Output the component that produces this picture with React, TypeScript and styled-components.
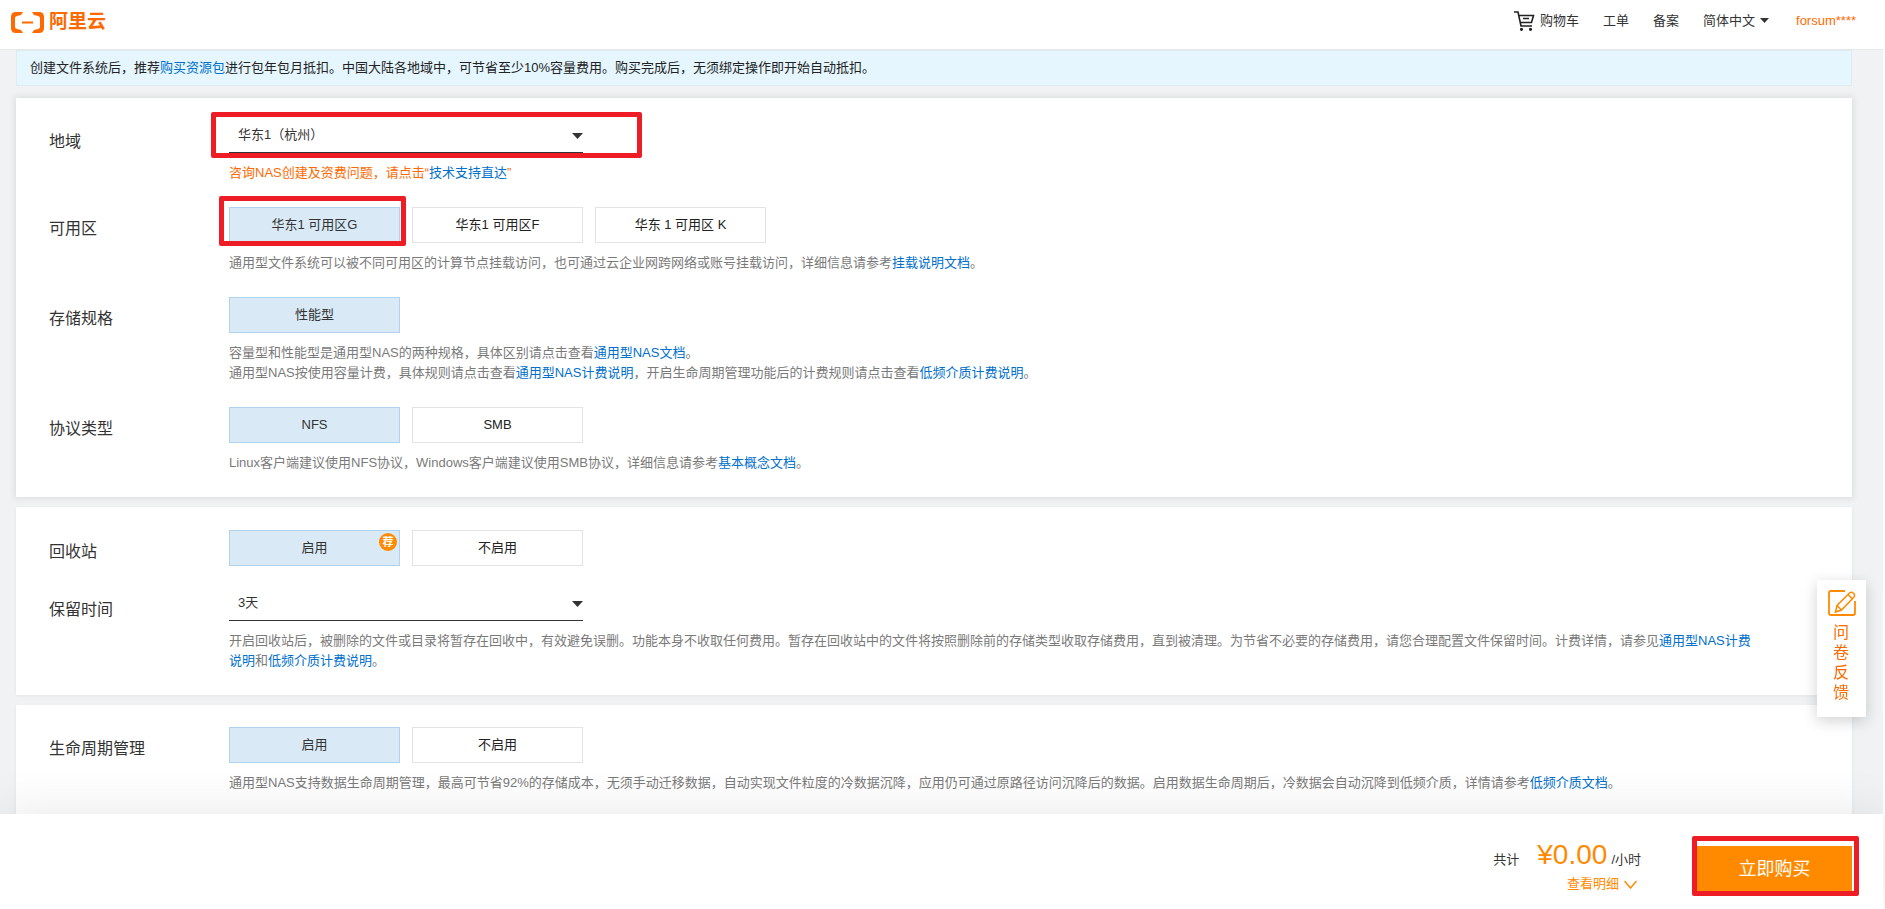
import React, { ReactNode } from 'react';
import styled, { createGlobalStyle } from 'styled-components';

const GlobalStyle = createGlobalStyle`
  * { box-sizing: border-box; }
  body {
    margin: 0;
    background: #f0f2f4;
    color: #333;
    font: 13px/20px "Liberation Sans", "Noto Sans CJK SC", sans-serif;
  }
  button, select { font: inherit; color: inherit; }
`;

const Shell = styled.div`
  display: flex;
  flex-direction: column;
  height: 100vh;
  border-right: 2px solid #fff;
`;

const Header = styled.header`
  display: flex;
  align-items: center;
  justify-content: space-between;
  flex: none;
  height: 50px;
  padding: 0 27px 8px 11px;
  background: #fff;
  border-bottom: 1px solid #e6e8e8;
`;

const LogoLink = styled.a`
  display: flex;
  align-items: center;
  gap: 5px;
  padding-top: 3px;
  color: #ff6a00;
  font-size: 19px;
  font-weight: 700;
  line-height: 24px;
  text-decoration: none;
`;

const Nav = styled.nav`
  display: flex;
  align-items: center;
  gap: 24px;
`;

const NavLink = styled.a<{ $accent?: boolean }>`
  display: flex;
  align-items: center;
  gap: 5px;
  color: ${p => (p.$accent ? '#ff6a00' : '#333')};
  text-decoration: none;
  margin-left: ${p => (p.$accent ? '3px' : '0')};
`;

const Main = styled.main`
  flex: 1;
  min-height: 0;
  overflow-y: auto;
  scrollbar-width: none;
  padding: 0 31px 24px 16px;
`;

const Notice = styled.p`
  margin: 0 0 12px;
  padding: 7px 13px;
  color: #222;
  background: #e5f6ff;
  border: 1px solid #e0ebf0;
`;

const Card = styled.section<{ $top: number; $raised?: boolean }>`
  display: flex;
  flex-direction: column;
  gap: 24px;
  margin-bottom: 10px;
  padding: ${p => p.$top}px 33px 24px;
  background: #fff;
  box-shadow: ${p => (p.$raised ? '0 0 6px 2px rgba(0,0,0,.08)' : '0 1px 4px rgba(0,0,0,.06)')};
`;

const Row = styled.div`
  display: grid;
  grid-template-columns: 180px minmax(0, 1fr);
`;

const Label = styled.label<{ $compact?: boolean }>`
  padding-top: ${p => (p.$compact ? 8 : 10)}px;
  font-size: 16px;
  line-height: 24px;
`;

const Options = styled.div`
  display: flex;
  gap: 12px;
`;

const OptionBox = styled.div`
  position: relative;
  width: 171px;
`;

const Option = styled.button<{ $on?: boolean }>`
  display: block;
  width: 100%;
  height: 36px;
  padding: 0;
  cursor: pointer;
  color: ${p => (p.$on ? '#333' : '#222')};
  background: ${p => (p.$on ? '#d9eaf6' : '#fff')};
  border: 1px solid ${p => (p.$on ? '#b0d3ef' : '#e3e3e3')};
`;

const Badge = styled.span`
  position: absolute;
  top: 3px;
  right: 3px;
  width: 18px;
  height: 18px;
  border-radius: 50%;
  background: #ff8a00;
  color: #fff;
  font-size: 11px;
  font-weight: 700;
  line-height: 18px;
  text-align: center;
`;

const SelectBox = styled.div`
  position: relative;
  width: 354px;
  height: 31px;
`;

const Select = styled.select`
  appearance: none;
  width: 100%;
  height: 100%;
  padding: 0 20px 5px 9px;
  background: none;
  border: 0;
  border-bottom: 1px solid #333;
  border-radius: 0;
`;

const SelectCaret = styled.svg`
  position: absolute;
  top: 11px;
  right: 0;
  pointer-events: none;
`;

const Help = styled.p<{ $accent?: boolean }>`
  margin: 10px 0 0;
  color: ${p => (p.$accent ? '#ff6a00' : '#7a7a7a')};
`;

const Link = styled.a`
  color: #0070cc;
  text-decoration: none;
`;

const Highlight = styled.span<{ $inset: string }>`
  position: absolute;
  inset: ${p => p.$inset};
  border: 5px solid #ee1c25;
  border-radius: 2px;
  pointer-events: none;
`;

const Footer = styled.footer`
  position: relative;
  display: flex;
  align-items: flex-start;
  justify-content: flex-end;
  flex: none;
  gap: 56px;
  height: 95px;
  padding: 27px 31px 0 16px;
  background: #fff;
  box-shadow: 0 0 50px rgba(0,0,0,.1);
`;

const Total = styled.div`
  display: flex;
  flex-direction: column;
  align-items: flex-end;
`;

const PriceLine = styled.div`
  display: flex;
  align-items: baseline;
  gap: 4px;
  line-height: 28px;
`;

const Price = styled.strong`
  margin-left: 14px;
  color: #ff8a00;
  font-size: 28px;
  font-weight: 400;
`;

const DetailButton = styled.button`
  display: flex;
  align-items: center;
  gap: 5px;
  padding: 0 4px 0 0;
  color: #ff8a00;
  background: none;
  border: 0;
  cursor: pointer;
`;

const BuyBox = styled.div`
  position: relative;
  margin-top: 5px;
`;

const BuyButton = styled.button`
  display: block;
  width: 155px;
  height: 45px;
  color: #fff;
  background: #ff8a00;
  border: 0;
  font-size: 18px;
  cursor: pointer;
`;

const Feedback = styled.a`
  position: fixed;
  right: 19px;
  top: 580px;
  z-index: 2;
  display: flex;
  flex-direction: column;
  align-items: center;
  gap: 7px;
  width: 49px;
  padding: 10px 16px;
  background: #fff;
  box-shadow: 0 4px 14px rgba(0,0,0,.18);
  color: #ff6a00;
  font-size: 16px;
  line-height: 20px;
  text-decoration: none;
  padding-bottom: 14px;
`;

const Caret = () => (
  <svg width="9" height="5" viewBox="0 0 9 5" aria-hidden="true"><path d="M0 0h9L4.500 5z" fill="#333" /></svg>
);

const Choice = ({ on, children, extra }: { on?: boolean; children: ReactNode; extra?: ReactNode }) => (
  <OptionBox>
    <Option type="button" $on={on} aria-pressed={!!on}>{children}</Option>
    {extra}
  </OptionBox>
);

const Dropdown = ({ id, value, extra }: { id: string; value: string; extra?: ReactNode }) => (
  <SelectBox>
    <Select id={id} defaultValue={value}><option>{value}</option></Select>
    <SelectCaret width="11" height="6" viewBox="0 0 11 6" aria-hidden="true"><path d="M0 0h11L5.500 6z" fill="#333" /></SelectCaret>
    {extra}
  </SelectBox>
);

const Field = ({ label, htmlFor, children }: { label: string; htmlFor?: string; children: ReactNode }) => (
  <Row>
    <Label as={htmlFor ? 'label' : 'span'} htmlFor={htmlFor} $compact={!!htmlFor}>{label}</Label>
    <div role={htmlFor ? undefined : 'group'} aria-label={htmlFor ? undefined : label}>{children}</div>
  </Row>
);

export default function App() {
  return (
    <Shell>
      <GlobalStyle />
      <Header>
        <LogoLink href="#">
          <svg width="33" height="21" viewBox="0 0 33 21" fill="#ff6a00" aria-hidden="true">
            <path d="M12 0H5Q0 0 0 5v11q0 5 5 5h7l-2-3-4-1q-2-.5-2-2V6q0-1.500 2-2l4-1z" />
            <path d="M21 0h7q5 0 5 5v11q0 5-5 5h-7l2-3 4-1q2-.5 2-2V6q0-1.500-2-2l-4-1z" />
            <path d="M11 9.500h11v2H11z" />
          </svg>
          阿里云
        </LogoLink>
        <Nav>
          <NavLink href="#">
            <svg width="21" height="20" viewBox="0 0 21 20" fill="none" stroke="#222" strokeWidth="1.600" aria-hidden="true">
              <path d="M0 1h4l3 14h11M4.500 4.500h15l-2 7H6.500M9 7.500h6" />
              <circle cx="7.500" cy="18.300" r=".8" /><circle cx="16.500" cy="18.300" r=".8" />
            </svg>
            购物车
          </NavLink>
          <NavLink href="#">工单</NavLink>
          <NavLink href="#">备案</NavLink>
          <NavLink href="#">简体中文<Caret /></NavLink>
          <NavLink href="#" $accent>forsum****</NavLink>
        </Nav>
      </Header>
      <Main>
        <Notice>
          创建文件系统后，推荐<Link href="#">购买资源包</Link>进行包年包月抵扣。中国大陆各地域中，可节省至少10%容量费用。购买完成后，无须绑定操作即开始自动抵扣。
        </Notice>
        <Card $top={24} $raised>
          <Field label="地域" htmlFor="region">
            <Dropdown id="region" value="华东1（杭州）" extra={<Highlight $inset="-10px -59px -5px -18px" />} />
            <Help $accent>咨询NAS创建及资费问题，请点击“<Link href="#">技术支持直达</Link>”</Help>
          </Field>
          <Field label="可用区">
            <Options>
              <Choice on extra={<Highlight $inset="-11px -6px -3px -10px" />}>华东1 可用区G</Choice>
              <Choice>华东1 可用区F</Choice>
              <Choice>华东 1 可用区 K</Choice>
            </Options>
            <Help>通用型文件系统可以被不同可用区的计算节点挂载访问，也可通过云企业网跨网络或账号挂载访问，详细信息请参考<Link href="#">挂载说明文档</Link>。</Help>
          </Field>
          <Field label="存储规格">
            <Options><Choice on>性能型</Choice></Options>
            <Help>
              容量型和性能型是通用型NAS的两种规格，具体区别请点击查看<Link href="#">通用型NAS文档</Link>。<br />
              通用型NAS按使用容量计费，具体规则请点击查看<Link href="#">通用型NAS计费说明</Link>，开启生命周期管理功能后的计费规则请点击查看<Link href="#">低频介质计费说明</Link>。
            </Help>
          </Field>
          <Field label="协议类型">
            <Options><Choice on>NFS</Choice><Choice>SMB</Choice></Options>
            <Help>Linux客户端建议使用NFS协议，Windows客户端建议使用SMB协议，详细信息请参考<Link href="#">基本概念文档</Link>。</Help>
          </Field>
        </Card>
        <Card $top={23}>
          <Field label="回收站">
            <Options><Choice on extra={<Badge>荐</Badge>}>启用</Choice><Choice>不启用</Choice></Options>
          </Field>
          <Field label="保留时间" htmlFor="retention">
            <Dropdown id="retention" value="3天" />
            <Help>
              开启回收站后，被删除的文件或目录将暂存在回收中，有效避免误删。功能本身不收取任何费用。暂存在回收站中的文件将按照删除前的存储类型收取存储费用，直到被清理。为节省不必要的存储费用，请您合理配置文件保留时间。计费详情，请参见<Link href="#">通用型NAS计费<br />说明</Link>和<Link href="#">低频介质计费说明</Link>。
            </Help>
          </Field>
        </Card>
        <Card $top={22}>
          <Field label="生命周期管理">
            <Options><Choice on>启用</Choice><Choice>不启用</Choice></Options>
            <Help>通用型NAS支持数据生命周期管理，最高可节省92%的存储成本，无须手动迁移数据，自动实现文件粒度的冷数据沉降，应用仍可通过原路径访问沉降后的数据。启用数据生命周期后，冷数据会自动沉降到低频介质，详情请参考<Link href="#">低频介质文档</Link>。</Help>
          </Field>
        </Card>
      </Main>
      <Footer>
        <Total>
          <PriceLine>共计<Price>¥0.00</Price>/小时</PriceLine>
          <DetailButton type="button">
            查看明细
            <svg width="13" height="9" viewBox="0 0 13 9" fill="none" stroke="#ff8a00" strokeWidth="1.500" aria-hidden="true"><path d="M.5 1l6 7 6-7" /></svg>
          </DetailButton>
        </Total>
        <BuyBox>
          <BuyButton type="button">立即购买</BuyButton>
          <Highlight $inset="-10px -7px -5px -5px" />
        </BuyBox>
      </Footer>
      <Feedback href="#">
        <svg width="28" height="26" viewBox="0 0 28 26" fill="none" stroke="#ff8a00" strokeWidth="1.800" aria-hidden="true">
          <path d="M17 1H3Q1 1 1 3v20q0 2 2 2h22q2 0 2-2V11" />
          <path d="M7.500 22l1.500-6.500L21.500 3q2-1.500 4 .3t.3 4L13.500 20zM20 4.500l4.500 4.500M9 15.500l4.500 4.500" strokeWidth="1.500" />
        </svg>
        问卷反馈
      </Feedback>
    </Shell>
  );
}
